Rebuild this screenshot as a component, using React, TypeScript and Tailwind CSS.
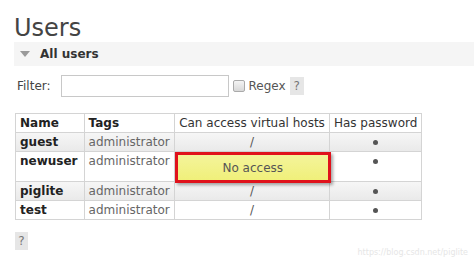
import React from "react";

const rows = [
  { name: "guest", tags: "administrator", vh: "/", shade: true },
  { name: "newuser", tags: "administrator", vh: "", shade: false, tall: true },
  { name: "piglite", tags: "administrator", vh: "/", shade: true },
  { name: "test", tags: "administrator", vh: "/", shade: false },
];

export default function App() {
  return (
    <div
      className="w-[474px] h-[261px] bg-white overflow-hidden relative text-[12px] text-[#484848]"
      style={{ fontFamily: '"DejaVu Sans", Verdana, sans-serif' }}
    >
      <div className="pl-[14px] pt-[14px]">
        <h1 className="text-[24px] leading-[28px] text-[#444] font-normal">Users</h1>
      </div>
      <div className="ml-[14px] h-[24px] bg-[#f5f5f5] flex items-center pl-[6px]">
        <svg width="10" height="8" viewBox="0 0 10 8" className="mr-[10px]">
          <polygon points="0,1 10,1 5,7" fill="#9a9a9a" />
        </svg>
        <span className="font-bold text-[12px] text-[#333]">All users</span>
      </div>
      <div className="flex items-center ml-[17px] mt-[9px] h-[22px]">
        <span className="text-[#444] mr-[10px]">Filter:</span>
        <div className="w-[168px] h-[22px] border border-[#c8c8c8] bg-white" />
        <div className="w-[12px] h-[12px] ml-[4px] border border-[#aaa] rounded-[2px] bg-gradient-to-b from-[#f4f4f4] to-[#d8d8d8]" />
        <span className="ml-[4px] text-[#555]">Regex</span>
        <span className="ml-[4px] w-[14px] h-[18px] bg-[#e6e6e6] text-[#777] flex items-center justify-center">?</span>
      </div>
      <table className="ml-[15px] mt-[16px] border-collapse" style={{ width: 407 }}>
        <colgroup>
          <col style={{ width: 69 }} />
          <col style={{ width: 90 }} />
          <col style={{ width: 156 }} />
          <col style={{ width: 92 }} />
        </colgroup>
        <thead>
          <tr className="h-[19px]">
            <th className="border border-[#d4d4d4] text-left font-bold text-[#222] px-[4px] py-0 leading-[17px]">Name</th>
            <th className="border border-[#d4d4d4] text-left font-bold text-[#222] px-[4px] py-0 leading-[17px]">Tags</th>
            <th className="border border-[#d4d4d4] text-center font-normal text-[#333] px-[3px] py-0 leading-[17px] whitespace-nowrap">Can access virtual hosts</th>
            <th className="border border-[#d4d4d4] text-center font-normal text-[#333] px-[3px] py-0 leading-[17px] whitespace-nowrap">Has password</th>
          </tr>
        </thead>
        <tbody>
          {rows.map((r) => (
            <tr
              key={r.name}
              className={(r.shade ? "bg-gradient-to-b from-[#f6f6f6] to-[#e9e9e9] " : "bg-white ") + (r.tall ? "h-[30px]" : "h-[19px]")}
            >
              <td className="border border-[#d4d4d4] align-top px-[4px] py-0 font-bold text-[#222] leading-[18px]">{r.name}</td>
              <td className="border border-[#d4d4d4] align-top px-[4px] py-0 text-[#666] leading-[18px]">{r.tags}</td>
              <td className="border border-[#d4d4d4] align-top text-center py-0 text-[#555] leading-[18px] relative">
                {r.tall ? (
                  <div className="absolute left-[0px] top-[0px] w-[156px] h-[31px] border-[3px] border-[#e0121c] bg-gradient-to-b from-[#f4f49a] to-[#f0f07a] shadow-[2px_2px_3px_rgba(0,0,0,0.35)] flex items-center justify-center text-[#555]">
                    No access
                  </div>
                ) : (
                  r.vh
                )}
              </td>
              <td className="border border-[#d4d4d4] align-top text-center py-0 leading-[18px]">
                <span className="inline-block w-[5px] h-[5px] rounded-full bg-[#555] align-middle" />
              </td>
            </tr>
          ))}
        </tbody>
      </table>
      <div className="ml-[15px] mt-[12px] w-[13px] h-[18px] bg-[#e6e6e6] text-[#777] flex items-center justify-center">?</div>
      <div className="absolute right-[6px] bottom-[2px] text-[8px] text-[#e6e6e6]">https://blog.csdn.net/piglite</div>
    </div>
  );
}
